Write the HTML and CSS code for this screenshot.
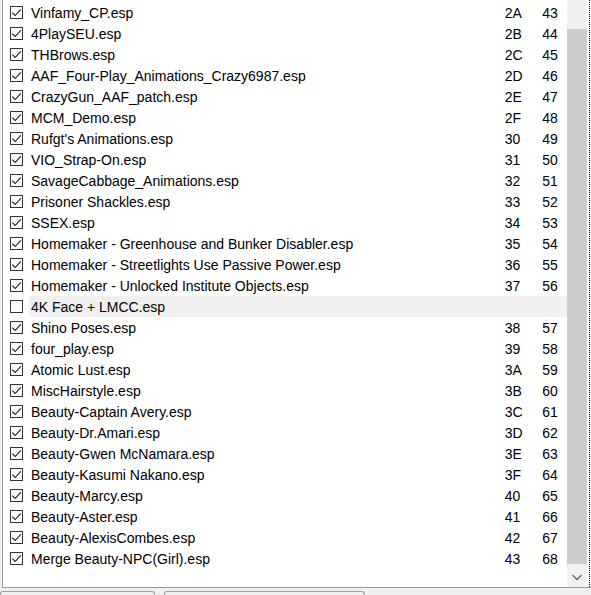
FILE: index.html
```html
<!DOCTYPE html>
<html>
<head>
<meta charset="utf-8">
<link rel="stylesheet" href="styles.css">
</head>
<body>
<div class="screen">
  <div class="list">
    <div class="rows" id="rows"></div>
    <div class="scrollbar">
      <div class="track"><div class="thumb"></div></div>
      <div class="arrow">
        <svg width="20" height="20" viewBox="0 0 20 20"><path d="M5.5 8 L10 12.5 L14.5 8" fill="none" stroke="#606060" stroke-width="1.3"/></svg>
      </div>
    </div>
    <div class="focus"></div>
  </div>
  <div class="tabs">
    <div class="tab t1"></div>
    <div class="tab t2"></div>
  </div>
</div>
<script src="app.js"></script>
</body>
</html>
```
FILE: app.js
```js
const data = [
["Vinfamy_CP.esp","2A","43"],
["4PlaySEU.esp","2B","44"],
["THBrows.esp","2C","45"],
["AAF_Four-Play_Animations_Crazy6987.esp","2D","46"],
["CrazyGun_AAF_patch.esp","2E","47"],
["MCM_Demo.esp","2F","48"],
["Rufgt's Animations.esp","30","49"],
["VIO_Strap-On.esp","31","50"],
["SavageCabbage_Animations.esp","32","51"],
["Prisoner Shackles.esp","33","52"],
["SSEX.esp","34","53"],
["Homemaker - Greenhouse and Bunker Disabler.esp","35","54"],
["Homemaker - Streetlights Use Passive Power.esp","36","55"],
["Homemaker - Unlocked Institute Objects.esp","37","56"],
["4K Face + LMCC.esp","",""],
["Shino Poses.esp","38","57"],
["four_play.esp","39","58"],
["Atomic Lust.esp","3A","59"],
["MiscHairstyle.esp","3B","60"],
["Beauty-Captain Avery.esp","3C","61"],
["Beauty-Dr.Amari.esp","3D","62"],
["Beauty-Gwen McNamara.esp","3E","63"],
["Beauty-Kasumi Nakano.esp","3F","64"],
["Beauty-Marcy.esp","40","65"],
["Beauty-Aster.esp","41","66"],
["Beauty-AlexisCombes.esp","42","67"],
["Merge Beauty-NPC(Girl).esp","43","68"]
];
const check = '<svg width="13" height="13" viewBox="0 0 13 13"><path d="M2.3 6.6 L5.2 9.5 L10.8 3.4" fill="none" stroke="#1a1a1a" stroke-width="1.1"/></svg>';
const rows = document.getElementById('rows');
rows.innerHTML = data.map(([n,h,i]) => {
  const on = h !== "";
  return `<div class="row${on ? '' : ' off'}"><span class="cb">${on ? check : ''}</span><span class="name">${n}</span><span class="hex">${h}</span><span class="idx">${i}</span></div>`;
}).join('');
```
FILE: styles.css
```css
html, body { margin: 0; padding: 0; }
body { background: #f0f0f0; }
.screen {
  width: 591px; height: 595px; overflow: hidden;
  background: #f0f0f0;
  font-family: "Liberation Sans", Arial, sans-serif;
  font-size: 14px; color: #000;
}
.list {
  margin-left: 2px;
  width: 589px; height: 588px;
  box-sizing: border-box;
  border-left: 1px solid #9a9a9a;
  border-bottom: 1px solid #9a9a9a;
  background: #fff;
  display: flex;
}
.rows {
  width: 564px;
  padding-top: 2px;
  display: flex; flex-direction: column;
}
.row {
  height: 21px;
  display: flex; align-items: center;
  position: relative;
}
.row.off::after {
  content: ""; position: absolute; left: 26px; right: 0; top: 0; bottom: 0;
  background: #f0f0f0; z-index: 0;
}
.row > span { position: relative; z-index: 1; }
.name, .hex, .idx { padding-top: 1px; }
.cb {
  margin-left: 7px;
  width: 13px; height: 13px; box-sizing: border-box;
  border: 1px solid #333; background: #fff;
  display: block;
}
.cb svg { display: block; margin: -1px; }
.name { margin-left: 8px; width: 479px; white-space: nowrap; }
.hex { width: 38px; }
.idx { width: 25px; }
.scrollbar {
  width: 20px; background: #f0f0f0;
  display: flex; flex-direction: column;
}
.track { flex: 1; padding-top: 29px; padding-bottom: 2px; }
.thumb { background: #cdcdcd; height: 535px; }
.arrow { height: 21px; display: flex; align-items: center; justify-content: center; }
.arrow svg { display: block; }
.focus {
  width: 2px; margin-left: 2px;
  border-left: 1px dotted #000;
}
.tabs { display: flex; padding-top: 3px; height: 4px; }
.tab {
  height: 4px; box-sizing: border-box;
  border: 1px solid #a0a0a0; border-bottom: none;
  border-radius: 3px 3px 0 0;
}
.t1 { width: 155px; }
.t2 { width: 201px; margin-left: 9px; }
```
